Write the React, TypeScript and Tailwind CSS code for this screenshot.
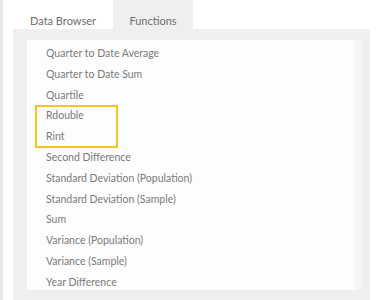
const FUNCTIONS = [
  "Quarter to Date Average",
  "Quarter to Date Sum",
  "Quartile",
  "Rdouble",
  "Rint",
  "Second Difference",
  "Standard Deviation (Population)",
  "Standard Deviation (Sample)",
  "Sum",
  "Variance (Population)",
  "Variance (Sample)",
  "Year Difference",
];

function Row({ label }: { label: string }) {
  return <div className="h-[20.8px] leading-[20.8px] pl-[19px] pt-[3px] whitespace-nowrap">{label}</div>;
}

export default function App() {
  const before = FUNCTIONS.slice(0, 3);
  const marked = FUNCTIONS.slice(3, 5);
  const after = FUNCTIONS.slice(5);

  return (
    <div
      className="h-[300px] w-[377px] overflow-hidden bg-white flex text-[#7a7a7a]"
      style={{ fontFamily: "Lato, 'Open Sans', sans-serif" }}
    >
      <div className="w-[3px] bg-[#e8e8e8] shrink-0" />
      <div className="ml-[10px] w-[357px] flex flex-col">
        {/* Tabs */}
        <div className="flex h-[32px] items-end text-[11px] text-[#6e6e6e]">
          <div className="w-[100px] h-[29px] flex items-center justify-center pt-[14px]">Data Browser</div>
          <div className="w-[80px] h-[29px] flex items-center justify-center pt-[14px] bg-[#efefef]">Functions</div>
        </div>

        {/* Panel */}
        <div className="flex-1 bg-[#efefef] pt-[11px] pl-[14px] pr-[8px] pb-[11px] flex">
          <div className="flex-1 bg-[#fdfdfd] text-[10.5px]">
            {before.map((f) => (
              <Row key={f} label={f} />
            ))}
            <div className="relative">
              {marked.map((f) => (
                <Row key={f} label={f} />
              ))}
              <div className="absolute left-[8px] top-[3px] bottom-[-4px] w-[83px] border-2 border-[#f3c41c]" />
            </div>
            {after.map((f) => (
              <Row key={f} label={f} />
            ))}
          </div>
          <div className="w-[7px] bg-[#f6f6f6]" />
        </div>
      </div>
    </div>
  );
}
